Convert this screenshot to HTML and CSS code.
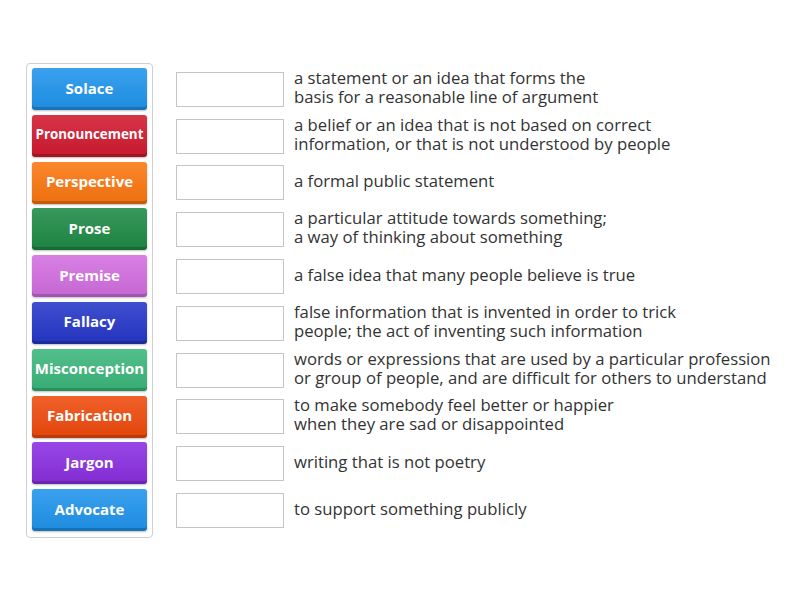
FILE: index.html
```html
<!DOCTYPE html>
<html lang="en">
<head>
    <meta charset="UTF-8">
    <title>Match up</title>
    <link rel="stylesheet" href="styles.css">
</head>
<body>

<div class="board">
    <!-- Word bank -->
    <div class="bank">
        <div class="tile blue">Solace</div>
        <div class="tile red tight">Pronouncement</div>
        <div class="tile orange">Perspective</div>
        <div class="tile green">Prose</div>
        <div class="tile orchid">Premise</div>
        <div class="tile navy">Fallacy</div>
        <div class="tile mint">Misconception</div>
        <div class="tile flame">Fabrication</div>
        <div class="tile purple">Jargon</div>
        <div class="tile blue">Advocate</div>
    </div>

    <!-- Definitions with drop boxes -->
    <div class="targets">
        <div class="row">
            <div class="slot"></div>
            <p class="definition">a statement or an idea that forms the<br>basis for a reasonable line of argument</p>
        </div>
        <div class="row">
            <div class="slot"></div>
            <p class="definition">a belief or an idea that is not based on correct<br>information, or that is not understood by people</p>
        </div>
        <div class="row">
            <div class="slot"></div>
            <p class="definition">a formal public statement</p>
        </div>
        <div class="row">
            <div class="slot"></div>
            <p class="definition">a particular attitude towards something;<br>a way of thinking about something</p>
        </div>
        <div class="row">
            <div class="slot"></div>
            <p class="definition">a false idea that many people believe is true</p>
        </div>
        <div class="row">
            <div class="slot"></div>
            <p class="definition">false information that is invented in order to trick<br>people; the act of inventing such information</p>
        </div>
        <div class="row">
            <div class="slot"></div>
            <p class="definition">words or expressions that are used by a particular profession<br>or group of people, and are difficult for others to understand</p>
        </div>
        <div class="row">
            <div class="slot"></div>
            <p class="definition">to make somebody feel better or happier<br>when they are sad or disappointed</p>
        </div>
        <div class="row">
            <div class="slot"></div>
            <p class="definition">writing that is not poetry</p>
        </div>
        <div class="row">
            <div class="slot"></div>
            <p class="definition">to support something publicly</p>
        </div>
    </div>
</div>

</body>
</html>
```

FILE: styles.css
```css
/* General page */
body {
    margin: 0;
    background-color: #ffffff;
    font-family: 'Open Sans', 'DejaVu Sans', sans-serif;
    color: #333333;
}

.board {
    display: flex;
    align-items: flex-start;
    padding: 63px 0 0 26px;
}

/* Word bank */
.bank {
    display: flex;
    flex-direction: column;
    gap: 4.8px;
    width: 115px;
    padding: 4px 5px 6px 5px;
    border: 1px solid #cfcfcf;
    border-radius: 4px;
}

.tile {
    height: 42px;
    box-sizing: border-box;
    padding-bottom: 3px;
    display: flex;
    align-items: center;
    justify-content: center;
    border-radius: 3px;
    color: #ffffff;
    font-size: 15px;
    font-weight: bold;
    white-space: nowrap;
    box-shadow: inset 0 -3px 0 rgba(0, 0, 0, 0.18), 0 1px 2px rgba(0, 0, 0, 0.25);
    background-image: linear-gradient(to bottom, rgba(255, 255, 255, 0.12), rgba(0, 0, 0, 0.06));
}

/* long words are shrunk to fit the tile */
.tight {
    font-size: 13.4px;
}

.blue { background-color: #1f94ec; }
.red { background-color: #d2192f; }
.orange { background-color: #fb760f; }
.green { background-color: #1e8a45; }
.orchid { background-color: #d26ee0; }
.navy { background-color: #2537c9; }
.mint { background-color: #3bb67a; }
.flame { background-color: #ef4a0c; }
.purple { background-color: #8a2ee0; }

/* Definitions */
.targets {
    display: flex;
    flex-direction: column;
    margin-left: 23px;
    padding-top: 3px;
}

.row {
    display: flex;
    align-items: center;
    height: 46.8px;
}

.slot {
    flex: none;
    width: 106px;
    height: 33px;
    border: 1px solid #c4c4c4;
    background-color: #ffffff;
}

.definition {
    margin: 0 0 5px 10px;
    font-size: 16.7px;
    line-height: 19px;
    white-space: nowrap;
}
```
